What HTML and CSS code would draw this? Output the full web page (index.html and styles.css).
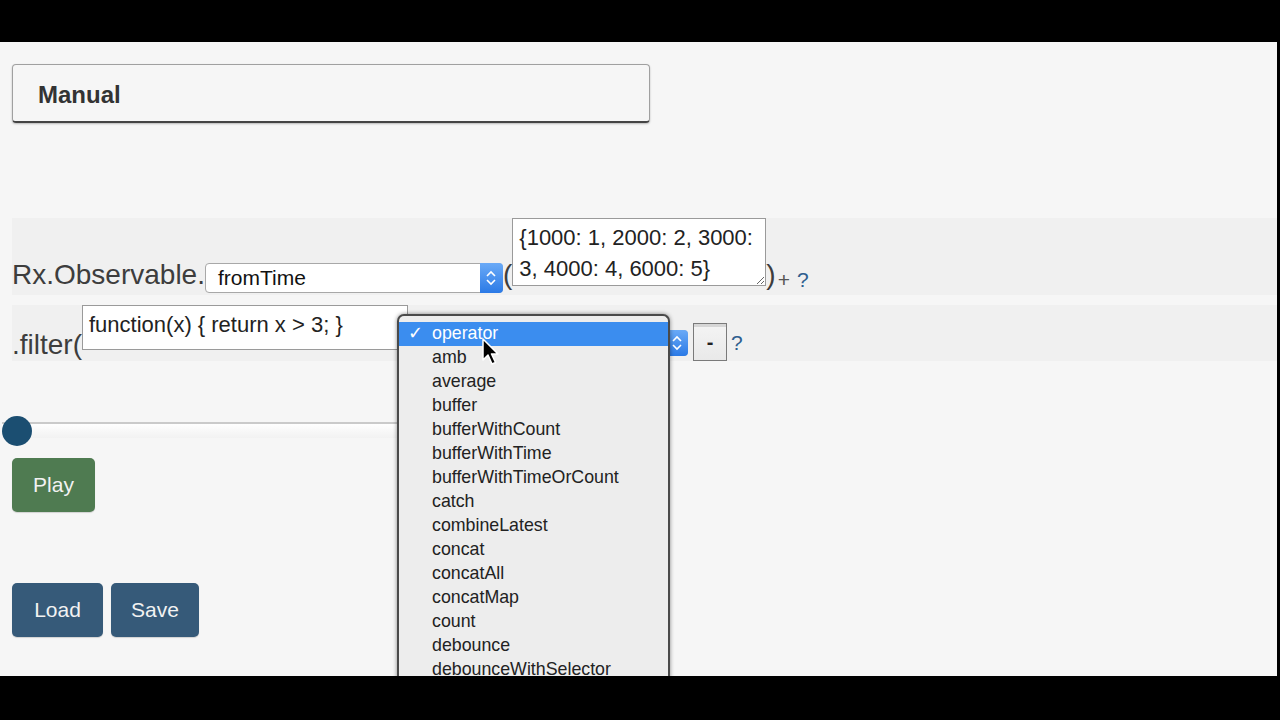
FILE: index.html
```html
<!DOCTYPE html>
<html lang="en">
<head>
  <meta charset="UTF-8">
  <title>Rx Marbles Playground</title>
  <link rel="stylesheet" href="styles.css">
</head>
<body>

<div class="screen">
  <div class="manual">Manual</div>

  <div class="expr expr-source">
    <span class="word">Rx.Observable.</span>
    <div class="select select-source">
      <span class="select-value">fromTime</span>
      <span class="stepper">
        <svg width="12" height="18" viewBox="0 0 12 18"><polyline points="2,7 6,3 10,7"/><polyline points="2,11 6,15 10,11"/></svg>
      </span>
    </div>
    <span class="word paren">(</span>
    <textarea class="arg arg-source">{1000: 1, 2000: 2, 3000:
3, 4000: 4, 6000: 5}</textarea>
    <span class="word paren">)</span>
    <span class="add">+</span>
    <span class="help">?</span>
  </div>

  <div class="expr expr-op">
    <span class="word">.filter(</span>
    <textarea class="arg arg-op">function(x) { return x > 3; }</textarea>
    <div class="select select-op">
      <span class="select-value">filter</span>
      <span class="stepper">
        <svg width="12" height="18" viewBox="0 0 12 18"><polyline points="2,7 6,3 10,7"/><polyline points="2,11 6,15 10,11"/></svg>
      </span>
    </div>
    <button class="remove">-</button>
    <span class="help help-op">?</span>
  </div>

  <div class="slider">
    <div class="slider-track"></div>
    <span class="slider-thumb"></span>
  </div>

  <button class="btn btn-play">Play</button>

  <div class="file-actions">
    <button class="btn btn-file">Load</button>
    <button class="btn btn-file btn-save">Save</button>
  </div>

  <ul class="dropdown">
    <li class="selected"><span class="check">&#10003;</span>operator</li>
    <li>amb</li>
    <li>average</li>
    <li>buffer</li>
    <li>bufferWithCount</li>
    <li>bufferWithTime</li>
    <li>bufferWithTimeOrCount</li>
    <li>catch</li>
    <li>combineLatest</li>
    <li>concat</li>
    <li>concatAll</li>
    <li>concatMap</li>
    <li>count</li>
    <li>debounce</li>
    <li>debounceWithSelector</li>
  </ul>

  <svg class="cursor" width="18" height="28" viewBox="0 0 18 28">
    <path d="M1 1 L1 22 L6 17 L10 26 L13.5 24.5 L9.5 16 L16 16 Z" fill="#000" stroke="#fff" stroke-width="1.5" stroke-linejoin="round"/>
  </svg>
</div>

</body>
</html>
```

FILE: styles.css
```css
body {
  margin: 0;
  background: #000;
  font-family: 'Liberation Sans', Helvetica, Arial, sans-serif;
  color: #3d3d3d;
}
.screen {
  position: relative;
  margin-top: 42px;
  width: 1277px;
  height: 634px;
  padding-left: 12px;
  box-sizing: border-box;
  background: #f6f6f6;
  overflow: hidden;
}
.manual {
  margin-top: 22px;
  width: 638px;
  height: 59px;
  box-sizing: border-box;
  padding: 3px 0 0 25px;
  border: 1px solid #a0a0a0;
  border-bottom: 2px solid #444;
  border-radius: 4px;
  box-shadow: 0 1px 2px rgba(0,0,0,0.25);
  font-size: 24px;
  font-weight: bold;
  line-height: 54px;
  color: #333;
}
.expr {
  display: flex;
  align-items: flex-end;
  background: #f0f0f0;
}
.expr-source {
  margin-top: 95px;
  height: 77px;
}
.expr-op {
  margin-top: 10px;
  height: 56px;
}
.word {
  font-size: 28px;
  line-height: 32px;
  color: #3d3d3d;
}
.expr-source .word {
  margin-bottom: 4px;
}
.add, .help {
  font-size: 21px;
  line-height: 24px;
  margin-bottom: 3px;
}
.add {
  margin-left: 2px;
  color: #555;
}
.help {
  margin-left: 7px;
  color: #2e5f8f;
}
.help-op {
  margin-left: 4px;
  margin-bottom: 6px;
}

/* mac style select */
.select {
  display: flex;
  align-items: stretch;
  box-sizing: border-box;
  border: 1px solid #a8a8a8;
  border-radius: 4px;
  background: #fff;
  font-size: 21px;
  color: #111;
}
.select-value {
  flex: 1;
  padding-left: 12px;
  line-height: 28px;
}
.stepper {
  width: 23px;
  display: flex;
  align-items: center;
  justify-content: center;
  margin: -1px -1px -1px 0;
  border-radius: 0 4px 4px 0;
  background: linear-gradient(#6aaaf7, #2b7ae6);
}
.stepper polyline {
  fill: none;
  stroke: #fff;
  stroke-width: 1.6;
}
.select-source {
  width: 298px;
  height: 30px;
  margin: 0 0 2px 0;
}
.select-op {
  width: 276px;
  height: 26px;
  margin: 0 0 5px 4px;
}
.select-op .select-value {
  line-height: 24px;
}

.arg {
  box-sizing: border-box;
  padding: 3px 6px;
  border: 1px solid #9a9a9a;
  background: #fff;
  font-family: inherit;
  font-size: 22px;
  line-height: 31px;
  color: #222;
  overflow: hidden;
}
.arg-source {
  width: 254px;
  height: 68px;
  margin-bottom: 9px;
}
.arg-op {
  width: 326px;
  height: 45px;
  margin-bottom: 11px;
}
.remove {
  width: 34px;
  height: 38px;
  margin-left: 5px;
  padding: 0;
  border: 1px solid #7a7a7a;
  background: linear-gradient(#f4f4f4, #e9e9e9);
  box-shadow: inset 0 3px 0 #d6d6d6;
  font-family: inherit;
  font-size: 20px;
  font-weight: bold;
  color: #222;
}

.slider {
  position: relative;
  width: 460px;
  height: 30px;
  box-sizing: border-box;
  padding-top: 6px;
  margin: 55px 0 0 -10px;
}
.slider-track {
  height: 16px;
  box-sizing: border-box;
  border-top: 2px solid #cacaca;
  border-radius: 0 6px 6px 0;
  background: linear-gradient(#fefefe, #f2f2f2);
}
.slider-thumb {
  position: absolute;
  left: 0;
  top: 0;
  width: 30px;
  height: 30px;
  border-radius: 50%;
  background: #1b4e71;
}

.btn {
  height: 54px;
  border: none;
  border-radius: 5px;
  font-family: inherit;
  font-size: 21px;
  color: #f2f2f2;
  box-shadow: 0 1px 1px rgba(0,0,0,0.15);
}
.btn-play {
  display: block;
  width: 83px;
  margin-top: 12px;
  background: #4f7b51;
}
.file-actions {
  display: flex;
  gap: 8px;
  margin-top: 71px;
}
.btn-file {
  width: 91px;
  background: #365a79;
}
.btn-save {
  width: 88px;
}

/* open select menu */
.dropdown {
  position: absolute;
  left: 397px;
  top: 272px;
  width: 273px;
  height: 400px;
  box-sizing: border-box;
  margin: 0;
  padding: 6px 0 0;
  list-style: none;
  border: 2px solid #4a4a4a;
  border-bottom: none;
  border-radius: 7px 7px 0 0;
  background: #ededed;
  box-shadow: 0 0 4px rgba(0,0,0,0.45);
  font-size: 17.8px;
  color: #222;
}
.dropdown li {
  position: relative;
  height: 24px;
  line-height: 23px;
  padding-left: 33px;
}
.dropdown .selected {
  background: #3b8def;
  color: #fff;
}
.check {
  position: absolute;
  left: 9px;
  font-size: 18px;
}
.cursor {
  position: absolute;
  left: 482px;
  top: 296px;
}
```
